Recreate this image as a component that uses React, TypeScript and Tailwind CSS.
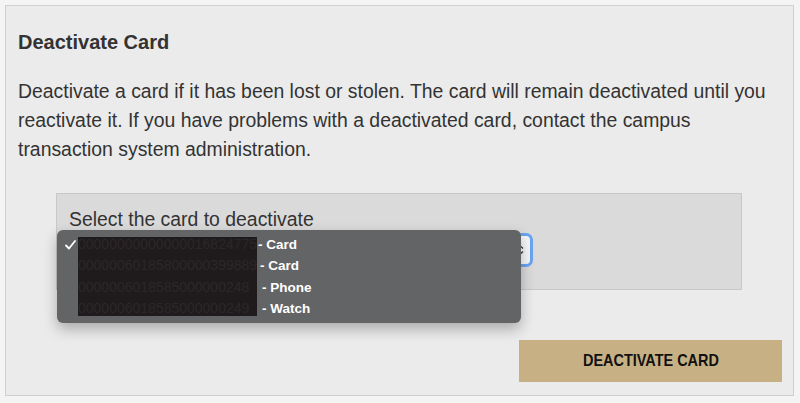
import React from 'react';

const options = [
  { id: '00000000000000016824775', kind: 'Card', numWidth: 180, selected: true },
  { id: '00000060185800000399889', kind: 'Card', numWidth: 182, selected: false },
  { id: '0000006018585000000248', kind: 'Phone', numWidth: 184, selected: false },
  { id: '0000006018585000000249', kind: 'Watch', numWidth: 184, selected: false },
];

const App: React.FC = () => {
  return (
    <div className="min-h-screen bg-[#f4f4f4] pt-[5px] pl-[5px] font-['Liberation_Sans',Arial,sans-serif]">
      <div className="w-[789px] h-[391px] border border-[#cfcfcf] bg-[#ebebeb] px-3 pt-6 flex flex-col">
        <h2 className="text-[20px] leading-6 font-bold text-[#333]">Deactivate Card</h2>
        <p className="mt-[23px] text-[19.4px] leading-[29px] text-[#333]">
          Deactivate a card if it has been lost or stolen. The card will remain deactivated until you
          <br />
          reactivate it. If you have problems with a deactivated card, contact the campus
          <br />
          transaction system administration.
        </p>

        <div className="mt-[29px] ml-[38px] w-[686px] h-[97px] border border-[#c8c8c8] bg-[#dadada] px-3 pt-[14px] relative">
          <label className="block text-[19.4px] leading-[22px] text-[#333]">Select the card to deactivate</label>
          <div className="mt-[3px] w-[464px] h-[34px] rounded-[7px] border-[3px] border-[#6aa4f3] bg-[#f7f7f7] flex items-center justify-end pr-[6px]">
            <svg width="6" height="12" viewBox="0 0 6 12" className="text-[#333]">
              <path d="M1 4.5 L3 2.5 L5 4.5" fill="none" stroke="currentColor" strokeWidth="1.2" />
              <path d="M1 7.5 L3 9.5 L5 7.5" fill="none" stroke="currentColor" strokeWidth="1.2" />
            </svg>
          </div>

          {/* open native dropdown */}
          <div className="absolute left-0 top-[36px] w-[464px] h-[93px] rounded-[6px] bg-[#636466] shadow-[0_6px_14px_rgba(0,0,0,0.28)] pt-[4px]">
            <div className="absolute left-[21px] top-[7px] w-[179px] h-[79px] bg-[#1f1b1d]" />
            {options.map((o) => (
              <div key={o.id} className="relative flex items-center h-[21.3px] text-[13.5px] leading-[21px]">
                <span className="w-[21px] flex justify-end pr-[2px]">
                  {o.selected && (
                    <svg width="11" height="10" viewBox="0 0 11 10">
                      <path d="M1 5.5 L4 8.5 L10 1" fill="none" stroke="#fff" strokeWidth="1.8" strokeLinecap="round" strokeLinejoin="round" />
                    </svg>
                  )}
                </span>
                <span
                  className="inline-block overflow-hidden whitespace-nowrap text-[#2b2729] text-[14px]"
                  style={{ width: o.numWidth }}
                >
                  {o.id}
                </span>
                <span className="text-white font-bold whitespace-nowrap">- {o.kind}</span>
              </div>
            ))}
          </div>
        </div>

        <div className="flex justify-end mt-[50px] -mr-px">
          <button className="w-[263px] h-[42px] bg-[#c8b085] text-[#111] font-bold text-[17px] flex items-center justify-center">
            <span className="inline-block scale-x-[0.85] whitespace-nowrap">DEACTIVATE CARD</span>
          </button>
        </div>
      </div>
    </div>
  );
};

export default App;
